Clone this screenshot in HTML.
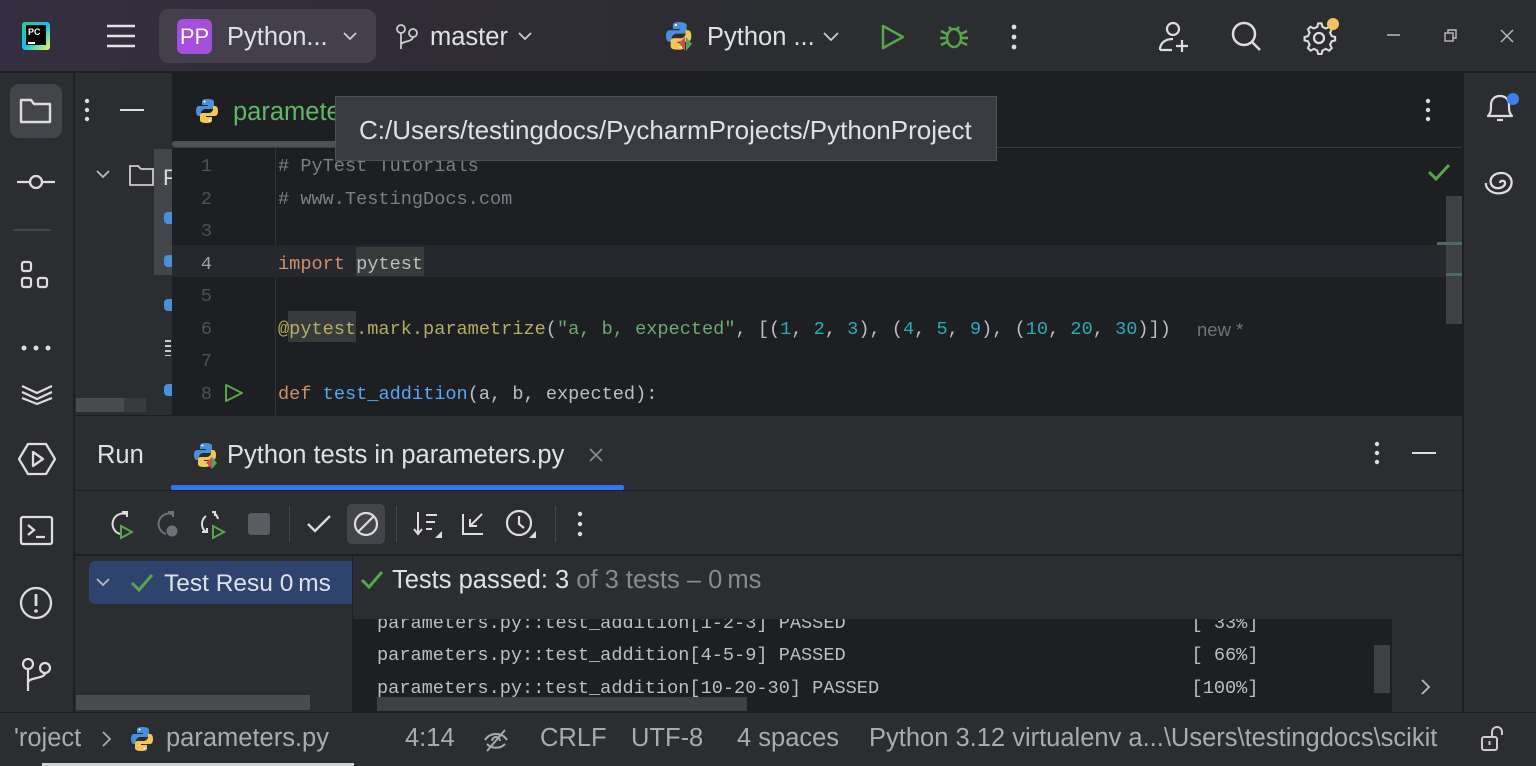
<!DOCTYPE html>
<html><head><meta charset="utf-8">
<style>
*{margin:0;padding:0;box-sizing:border-box}
body{width:1536px;height:766px;overflow:hidden;background:#1e1f22;font-family:"Liberation Sans",sans-serif;color:#dfe1e5;position:relative}
.a{position:absolute}
.mono{font-family:"Liberation Mono",monospace;font-size:18.6px;white-space:pre}
svg{position:absolute;overflow:visible}
.ln{position:absolute;left:172px;width:70px;text-align:right;color:#4b5059;font-family:"Liberation Mono",monospace;font-size:18.6px}
.cl{position:absolute;left:278px;color:#bcbec4}
.k{color:#cf8e6d}.f{color:#56a8f5}.c{color:#7a7e85}.s{color:#6aab73}.n{color:#2aacb8}.d{color:#b3ae60}
.st{position:absolute;top:724px;font-size:25.5px;color:#a8abb0}
</style></head><body>
<svg width="0" height="0"><defs>
<g id="py"><path d="M11 1c-5 0-5 2-5 3v3h6v1H3C1 8 0 10 0 13s1 5 3 5h2v-3c0-2 2-4 4-4h6c2 0 3-1 3-3V4c0-2-2-3-7-3z" fill="#4a8fdb"/><circle cx="8.5" cy="3.5" r="1" fill="#fff"/><path d="M11 25c5 0 5-2 5-3v-3h-6v-1h9c2 0 3-2 3-5s-1-5-3-5h-2v3c0 2-2 4-4 4H7c-2 0-3 1-3 3v4c0 2 2 3 7 3z" fill="#f3c850"/><circle cx="13.5" cy="22.5" r="1" fill="#fff"/></g>
</defs></svg>

<div class="a" style="left:0;top:0;width:1536px;height:72px;background:linear-gradient(90deg,#352e40 0%,#2f2c36 30%,#2b2d30 55%);border-bottom:1px solid #1e1f22"></div>
<div class="a" style="left:22px;top:22px;width:28px;height:28px;background:linear-gradient(135deg,#21d789,#07c3f2 50%,#fcf84a);border-radius:3px"></div>
<div class="a" style="left:26px;top:25px;width:20px;height:20px;background:#000;color:#fff;font-size:9px;font-weight:bold;padding:2px">PC<div style="width:7px;height:2px;background:#fff;margin-top:5px"></div></div>
<svg style="left:106px;top:24px" width="30" height="24"><path d="M1 2h28M1 12h28M1 22h28" stroke="#dfe1e5" stroke-width="2.5"/></svg>
<div class="a" style="left:159px;top:9px;width:217px;height:54px;background:#4a4553;border-radius:10px;opacity:.75"></div>
<div class="a" style="left:177px;top:19px;width:35px;height:35px;background:#a34fdc;border-radius:6px;color:#fff;font-size:22px;line-height:35px;text-align:center">PP</div>
<div class="a" style="left:227px;top:23px;font-size:25.5px;color:#dfe1e5">Python...</div>
<svg style="left:343px;top:32px" width="14" height="8"><path d="M1 1l6 6 6-6" stroke="#ccc" stroke-width="1.8" fill="none"/></svg>
<svg style="left:396px;top:24px" width="22" height="26"><circle cx="5" cy="5" r="4" stroke="#ccc" stroke-width="1.8" fill="none"/><circle cx="17" cy="9" r="4" stroke="#ccc" stroke-width="1.8" fill="none"/><path d="M5 9v16M17 13c0 5-12 4-12 8" stroke="#ccc" stroke-width="1.8" fill="none"/></svg>
<div class="a" style="left:430px;top:23px;font-size:25.5px">master</div>
<svg style="left:518px;top:32px" width="14" height="8"><path d="M1 1l6 6 6-6" stroke="#ccc" stroke-width="1.8" fill="none"/></svg>
<svg style="left:666px;top:21px" width="30" height="34"><use href="#py" transform="scale(1.15)"/><path d="M13 22l6-6v14z" fill="#c94f4f"/><path d="M20 16l6 7-6 7z" fill="#4fa35a"/></svg>
<div class="a" style="left:707px;top:23px;font-size:25.5px">Python ...</div>
<svg style="left:823px;top:32px" width="16" height="9"><path d="M1 1l7 7 7-7" stroke="#ccc" stroke-width="1.8" fill="none"/></svg>
<svg style="left:880px;top:24px" width="26" height="26"><path d="M3 2l20 11L3 24z" stroke="#57a64a" stroke-width="2.5" fill="none" stroke-linejoin="round"/></svg>
<svg style="left:939px;top:22px" width="30" height="28"><ellipse cx="15" cy="16" rx="7" ry="9" stroke="#57a64a" stroke-width="2.5" fill="none"/><path d="M10 5l3 3M20 5l-3 3M1 16h7M22 16h7M2 9l6 3M28 9l-6 3M2 23l6-3M28 23l-6-3" stroke="#57a64a" stroke-width="2.5"/></svg>
<svg style="left:1010px;top:24px" width="8" height="26"><circle cx="4" cy="3" r="2.4" fill="#ddd"/><circle cx="4" cy="13" r="2.4" fill="#ddd"/><circle cx="4" cy="23" r="2.4" fill="#ddd"/></svg>
<svg style="left:1158px;top:20px" width="34" height="34"><circle cx="15" cy="9" r="6" stroke="#ddd" stroke-width="2.2" fill="none"/><path d="M2 30c0-7 5-11 13-11M24 20v12M18 26h12M2 30h12" stroke="#ddd" stroke-width="2.2" fill="none"/></svg>
<svg style="left:1230px;top:20px" width="34" height="34"><circle cx="14" cy="14" r="11" stroke="#ddd" stroke-width="2.5" fill="none"/><path d="M22 22l8 8" stroke="#ddd" stroke-width="2.5"/></svg>
<svg style="left:1302px;top:20px" width="40" height="36"><path d="M17 2l4 0 1 4 4 2 4-2 3 3-2 4 2 4 4 1v4l-4 1-2 4 2 4-3 3-4-2-4 2-1 4h-4l-1-4-4-2-4 2-3-3 2-4-2-4-4-1v-4l4-1 2-4-2-4 3-3 4 2 4-2z" transform="scale(.85) translate(2,2)" stroke="#ddd" stroke-width="2.4" fill="none"/><circle cx="17" cy="18" r="5" stroke="#ddd" stroke-width="2.3" fill="none"/><circle cx="31" cy="4" r="6" fill="#f2c55c"/></svg>
<svg style="left:1387px;top:34px" width="14" height="2"><path d="M0 1h13" stroke="#bbb" stroke-width="1.5"/></svg>
<svg style="left:1444px;top:29px" width="14" height="14"><rect x="1" y="4" width="8" height="8" stroke="#bbb" stroke-width="1.4" fill="none"/><path d="M4 4V1h8v8H9" stroke="#bbb" stroke-width="1.4" fill="none"/></svg>
<svg style="left:1500px;top:29px" width="14" height="14"><path d="M1 1l12 12M13 1L1 13" stroke="#bbb" stroke-width="1.4"/></svg>

<div class="a" style="left:0;top:73px;width:74px;height:639px;background:#2b2d30;border-right:1px solid #1e1f22"></div>
<div class="a" style="left:10px;top:84px;width:52px;height:54px;background:#43454a;border-radius:9px"></div>
<svg style="left:19px;top:96px" width="34" height="30"><path d="M2 4h10l3 4h16v18H2z" stroke="#ddd" stroke-width="2.4" fill="none" stroke-linejoin="round"/></svg>
<svg style="left:16px;top:172px" width="40" height="20"><circle cx="20" cy="10" r="6" stroke="#ddd" stroke-width="2.3" fill="none"/><path d="M1 10h13M26 10h13" stroke="#ddd" stroke-width="2.3"/></svg>
<div class="a" style="left:13px;top:229px;width:38px;height:2px;background:#43454a"></div>
<svg style="left:20px;top:260px" width="32" height="32"><rect x="2" y="2" width="9" height="9" rx="2" stroke="#ddd" stroke-width="2.2" fill="none"/><rect x="2" y="18" width="9" height="9" rx="2" stroke="#ddd" stroke-width="2.2" fill="none"/><rect x="18" y="18" width="9" height="9" rx="2" stroke="#ddd" stroke-width="2.2" fill="none"/></svg>
<svg style="left:20px;top:344px" width="32" height="8"><circle cx="4" cy="4" r="2.5" fill="#ddd"/><circle cx="16" cy="4" r="2.5" fill="#ddd"/><circle cx="28" cy="4" r="2.5" fill="#ddd"/></svg>
<svg style="left:20px;top:380px" width="34" height="24"><path d="M2 6l15 7 15-7M2 12l15 7 15-7M2 18l15 6 15-6" stroke="#ddd" stroke-width="2.2" fill="none"/></svg>
<svg style="left:18px;top:442px" width="38" height="34"><path d="M10 2h18l9 15-9 15H10L1 17z" stroke="#ddd" stroke-width="2.3" fill="none" stroke-linejoin="round"/><path d="M15 10l10 7-10 7z" stroke="#ddd" stroke-width="2.3" fill="none" stroke-linejoin="round"/></svg>
<svg style="left:19px;top:515px" width="36" height="32"><rect x="2" y="2" width="31" height="27" rx="2" stroke="#ddd" stroke-width="2.3" fill="none"/><path d="M9 10l6 5-6 5M17 22h9" stroke="#ddd" stroke-width="2.3" fill="none"/></svg>
<svg style="left:19px;top:586px" width="36" height="36"><circle cx="17" cy="17" r="15" stroke="#ddd" stroke-width="2.3" fill="none"/><path d="M17 8v12" stroke="#ddd" stroke-width="2.8"/><circle cx="17" cy="25" r="1.8" fill="#ddd"/></svg>
<svg style="left:21px;top:657px" width="32" height="36"><circle cx="7" cy="7" r="5" stroke="#ddd" stroke-width="2.2" fill="none"/><circle cx="24" cy="11" r="5" stroke="#ddd" stroke-width="2.2" fill="none"/><path d="M7 12v22M24 16c0 6-17 4-17 10" stroke="#ddd" stroke-width="2.2" fill="none"/></svg>

<div class="a" style="left:75px;top:73px;width:97px;height:342px;background:#2b2d30"></div>
<svg style="left:83px;top:98px" width="8" height="26"><circle cx="4" cy="3" r="2.2" fill="#ddd"/><circle cx="4" cy="12" r="2.2" fill="#ddd"/><circle cx="4" cy="21" r="2.2" fill="#ddd"/></svg>
<div class="a" style="left:120px;top:109px;width:24px;height:2px;background:#ddd"></div>
<svg style="left:96px;top:170px" width="14" height="9"><path d="M1 1l6 6 6-6" stroke="#bbb" stroke-width="1.8" fill="none"/></svg>
<svg style="left:129px;top:163px" width="26" height="24"><path d="M1 3h8l3 3h12v16H1z" stroke="#ccc" stroke-width="1.8" fill="none"/></svg>
<div class="a" style="left:154px;top:149px;width:18px;height:126px;background:#43454a"></div>
<div class="a" style="left:163px;top:165px;font-size:22px;color:#ddd">P</div>
<div class="a" style="left:164px;top:212px;width:8px;height:12px;background:#4a8fdb;border-radius:4px 0 0 4px"></div>
<div class="a" style="left:164px;top:255px;width:8px;height:12px;background:#4a8fdb;border-radius:4px 0 0 4px"></div>
<div class="a" style="left:164px;top:299px;width:8px;height:12px;background:#4a8fdb;border-radius:4px 0 0 4px"></div>
<div class="a" style="left:165px;top:340px;width:6px;height:16px;background:repeating-linear-gradient(#ccc 0 2px,transparent 2px 5px)"></div>
<div class="a" style="left:164px;top:384px;width:8px;height:12px;background:#4a8fdb;border-radius:4px 0 0 4px"></div>
<div class="a" style="left:76px;top:398px;width:48px;height:14px;background:#4a4b4f"></div>
<div class="a" style="left:124px;top:398px;width:22px;height:14px;background:#393a3e"></div>

<div class="a" style="left:172px;top:73px;width:1290px;height:342px;background:#1e1f22"></div>
<div class="a" style="left:172px;top:147px;width:1290px;height:1px;background:#393b40"></div>
<div class="a" style="left:172px;top:141px;width:170px;height:6px;background:#4e5157;border-radius:3px"></div>
<svg style="left:196px;top:98px" width="24" height="26"><use href="#py"/></svg>
<div class="a" style="left:233px;top:98px;font-size:25.5px;color:#5fb865">paramete</div>
<svg style="left:1424px;top:98px" width="8" height="26"><circle cx="4" cy="3" r="2.2" fill="#ddd"/><circle cx="4" cy="12" r="2.2" fill="#ddd"/><circle cx="4" cy="21" r="2.2" fill="#ddd"/></svg>
<svg style="left:1427px;top:163px" width="24" height="18"><path d="M2 9l7 7L22 2" stroke="#57a64a" stroke-width="3" fill="none"/></svg>
<div class="a" style="left:1446px;top:196px;width:16px;height:128px;background:#3e4044"></div>
<div class="a" style="left:1437px;top:242px;width:25px;height:3px;background:#4d6b5c"></div>
<div class="a" style="left:1437px;top:273px;width:25px;height:3px;background:#4d6b5c"></div>
<div class="a" style="left:275px;top:148px;width:1px;height:267px;background:#313338"></div>
<div class="a" style="left:172px;top:245px;width:1274px;height:32px;background:#26282e"></div>
<div class="a" style="left:356px;top:247px;width:68px;height:29px;background:#373b39"></div>
<div class="a" style="left:288px;top:311px;width:68px;height:31px;background:#373b39"></div>

<div class="ln" style="top:156px;left:142px">1</div>
<div class="ln" style="top:189px;left:142px">2</div>
<div class="ln" style="top:221px;left:142px">3</div>
<div class="ln" style="top:254px;left:142px;color:#a1a3ab">4</div>
<div class="ln" style="top:286px;left:142px">5</div>
<div class="ln" style="top:319px;left:142px">6</div>
<div class="ln" style="top:351px;left:142px">7</div>
<div class="ln" style="top:384px;left:142px">8</div>
<svg style="left:224px;top:383px" width="20" height="20"><path d="M2 2l16 8-16 8z" stroke="#57a64a" stroke-width="2" fill="none" stroke-linejoin="round"/></svg>

<div class="cl mono c" style="top:156px"># PyTest Tutorials</div>
<div class="cl mono c" style="top:189px"># www.TestingDocs.com</div>
<div class="cl mono" style="top:254px"><span class="k">import</span> pytest</div>
<div class="cl mono" style="top:319px"><span class="d">@pytest.mark.parametrize</span>(<span class="s">"a, b, expected"</span>, [(<span class="n">1</span>, <span class="n">2</span>, <span class="n">3</span>), (<span class="n">4</span>, <span class="n">5</span>, <span class="n">9</span>), (<span class="n">10</span>, <span class="n">20</span>, <span class="n">30</span>)])</div>
<div class="a" style="left:1197px;top:319px;font-size:18.5px;color:#6f737a">new *</div>
<div class="cl mono" style="top:384px"><span class="k">def</span> <span class="f">test_addition</span>(a, b, expected):</div>

<div class="a" style="left:335px;top:96px;width:662px;height:65px;background:#393b40;border:1px solid #4e5157"></div>
<div class="a" style="left:359px;top:115px;font-size:26px;color:#dfe1e5">C:/Users/testingdocs/PycharmProjects/PythonProject</div>

<div class="a" style="left:1463px;top:73px;width:73px;height:639px;background:#2b2d30;border-left:1px solid #1e1f22"></div>
<svg style="left:1484px;top:92px" width="40" height="38"><path d="M4 24c3-3 3-6 3-11s3-9 9-9 9 4 9 9 0 8 3 11z" stroke="#ddd" stroke-width="2.2" fill="none" stroke-linejoin="round"/><path d="M13 28h6" stroke="#ddd" stroke-width="2.2"/><circle cx="29" cy="7" r="6" fill="#3d7ef2"/></svg>
<svg style="left:1484px;top:168px" width="34" height="30"><path d="M16 15c0-3 5-3 5 0s-4 6-9 5-7-7-4-11 12-6 17-1 3 15-7 17S1 20 2 15" stroke="#ddd" stroke-width="2.3" fill="none"/></svg>

<div class="a" style="left:75px;top:415px;width:1387px;height:297px;background:#2b2d30;border-top:1px solid #1e1f22"></div>
<div class="a" style="left:97px;top:441px;font-size:25.5px;color:#dfe1e5">Run</div>
<svg style="left:194px;top:442px" width="28" height="30"><use href="#py"/><path d="M12 21l6-6v12z" fill="#c94f4f"/><path d="M18 15l5 6-5 6z" fill="#4fa35a"/></svg>
<div class="a" style="left:227px;top:441px;font-size:25.5px;color:#dfe1e5">Python tests in parameters.py</div>
<svg style="left:589px;top:448px" width="14" height="14"><path d="M1 1l12 12M13 1L1 13" stroke="#8b8e94" stroke-width="1.6"/></svg>
<div class="a" style="left:171px;top:485px;width:453px;height:5px;background:#3574f0;border-radius:2px"></div>
<div class="a" style="left:75px;top:490px;width:1387px;height:1px;background:#1e1f22"></div>
<svg style="left:1373px;top:441px" width="8" height="24"><circle cx="4" cy="3" r="2.2" fill="#ddd"/><circle cx="4" cy="12" r="2.2" fill="#ddd"/><circle cx="4" cy="21" r="2.2" fill="#ddd"/></svg>
<div class="a" style="left:1412px;top:452px;width:24px;height:2px;background:#ddd"></div>

<svg style="left:106px;top:510px" width="30" height="30"><path d="M20 4a10 10 0 1 0-6 20" stroke="#ddd" stroke-width="2" fill="none"/><path d="M16 2h5v5" stroke="#ddd" stroke-width="2" fill="none"/><path d="M15 16l11 6-11 6z" stroke="#57a64a" stroke-width="2" fill="none"/></svg>
<svg style="left:152px;top:510px" width="30" height="30"><path d="M20 4a10 10 0 1 0-6 20" stroke="#6f7278" stroke-width="2" fill="none"/><path d="M16 2h5v5" stroke="#6f7278" stroke-width="2" fill="none"/><circle cx="20" cy="21" r="5.5" fill="#6f7278"/></svg>
<svg style="left:198px;top:510px" width="32" height="30"><path d="M8 6a10 10 0 0 0 0 16M16 3a10 10 0 0 1 4 6" stroke="#ddd" stroke-width="2" fill="none"/><path d="M14 2l3 0 0 4M4 22h5v-4" stroke="#ddd" stroke-width="2" fill="none"/><path d="M15 16l11 6-11 6z" stroke="#57a64a" stroke-width="2" fill="none"/></svg>
<div class="a" style="left:248px;top:513px;width:22px;height:22px;background:#5a5c61;border-radius:3px"></div>
<div class="a" style="left:289px;top:506px;width:1px;height:36px;background:#43454a"></div>
<svg style="left:306px;top:514px" width="26" height="20"><path d="M2 10l7 7L24 2" stroke="#ddd" stroke-width="2.3" fill="none"/></svg>
<div class="a" style="left:347px;top:504px;width:38px;height:40px;background:#43454a;border-radius:5px"></div>
<svg style="left:353px;top:511px" width="28" height="28"><circle cx="13" cy="13" r="11" stroke="#ddd" stroke-width="2.2" fill="none"/><path d="M5 21L21 5" stroke="#ddd" stroke-width="2.2"/></svg>
<div class="a" style="left:396px;top:506px;width:1px;height:36px;background:#43454a"></div>
<svg style="left:413px;top:510px" width="32" height="30"><path d="M5 2v22M1 19l4 5 4-5M13 5h11M13 12h9M13 19h6" stroke="#ddd" stroke-width="2" fill="none"/><path d="M22 28l7-7v7z" fill="#ddd"/></svg>
<svg style="left:460px;top:510px" width="28" height="28"><path d="M3 4v20h20M22 4L10 16M10 9v7h7" stroke="#ddd" stroke-width="2" fill="none"/></svg>
<svg style="left:505px;top:509px" width="34" height="32"><circle cx="14" cy="14" r="12" stroke="#ddd" stroke-width="2.2" fill="none"/><path d="M14 7v8l5 4" stroke="#ddd" stroke-width="2.2" fill="none"/><path d="M24 29l7-7v7z" fill="#ddd"/></svg>
<div class="a" style="left:555px;top:506px;width:1px;height:36px;background:#43454a"></div>
<svg style="left:576px;top:511px" width="8" height="26"><circle cx="4" cy="3" r="2.2" fill="#ddd"/><circle cx="4" cy="13" r="2.2" fill="#ddd"/><circle cx="4" cy="23" r="2.2" fill="#ddd"/></svg>
<div class="a" style="left:75px;top:554px;width:1387px;height:2px;background:#1e1f22"></div>

<div class="a" style="left:89px;top:561px;width:263px;height:43px;background:#2e436e;border-radius:6px 0 0 6px"></div>
<svg style="left:96px;top:578px" width="14" height="9"><path d="M1 1l6 6 6-6" stroke="#bbb" stroke-width="1.8" fill="none"/></svg>
<svg style="left:130px;top:573px" width="24" height="20"><path d="M2 10l7 7L22 2" stroke="#57a64a" stroke-width="3" fill="none"/></svg>
<div class="a" style="left:164px;top:570px;font-size:24.5px;color:#dfe1e5">Test Resu 0&#8201;ms</div>
<div class="a" style="left:352px;top:556px;width:1px;height:156px;background:#1e1f22"></div>
<div class="a" style="left:76px;top:695px;width:234px;height:15px;background:#4a4b4f"></div>
<svg style="left:360px;top:570px" width="24" height="20"><path d="M2 10l7 7L22 2" stroke="#57a64a" stroke-width="3" fill="none"/></svg>
<div class="a" style="left:392px;top:566px;font-size:25.5px;color:#dfe1e5">Tests passed: 3 <span style="color:#868a91">of 3 tests – 0&#8201;ms</span></div>

<div class="a" style="left:353px;top:619px;width:1039px;height:93px;background:#1e1f22"></div>
<div class="a mono" style="left:377px;top:619px;color:#bcbec4;height:14px;overflow:hidden;width:1000px"><div style="margin-top:-6px">parameters.py::test_addition[1-2-3] PASSED                               [ 33%]</div></div>
<div class="a mono" style="left:377px;top:645px;color:#bcbec4">parameters.py::test_addition[4-5-9] PASSED                               [ 66%]</div>
<div class="a mono" style="left:377px;top:678px;color:#bcbec4">parameters.py::test_addition[10-20-30] PASSED                            [100%]</div>
<div class="a" style="left:1374px;top:645px;width:16px;height:48px;background:#3e4044"></div>
<div class="a" style="left:377px;top:697px;width:370px;height:14px;background:#3e4044"></div>
<svg style="left:1421px;top:679px" width="10" height="16"><path d="M1 1l7 7-7 7" stroke="#bbb" stroke-width="1.8" fill="none"/></svg>

<div class="a" style="left:0;top:712px;width:1536px;height:54px;background:#2b2d30;border-top:1px solid #1e1f22"></div>
<div class="a" style="left:42px;top:763px;width:312px;height:3px;background:#cfd1d5"></div>
<div class="st" style="left:14px">'roject</div>
<svg style="left:102px;top:731px" width="10" height="16"><path d="M1 1l7 7-7 7" stroke="#a8abb0" stroke-width="1.8" fill="none"/></svg>
<svg style="left:131px;top:726px" width="24" height="26"><use href="#py"/></svg>
<div class="st" style="left:166px">parameters.py</div>
<div class="st" style="left:405px">4:14</div>
<svg style="left:483px;top:727px" width="26" height="26"><path d="M2 13c5-8 17-8 22 0M4 17c5 5 13 5 18 0M9 14a4 4 0 0 1 8 0M22 3L4 24" stroke="#a8abb0" stroke-width="2" fill="none"/></svg>
<div class="st" style="left:540px">CRLF</div>
<div class="st" style="left:631px">UTF-8</div>
<div class="st" style="left:737px">4 spaces</div>
<div class="st" style="left:869px">Python 3.12 virtualenv a...\Users\testingdocs\scikit</div>
<svg style="left:1481px;top:726px" width="24" height="26"><rect x="1" y="11" width="15" height="13" rx="2" stroke="#ccc" stroke-width="2" fill="none"/><path d="M11 11V6a5 5 0 0 1 10 0v3M8.5 15v4" stroke="#ccc" stroke-width="2" fill="none"/></svg>
</body></html>
